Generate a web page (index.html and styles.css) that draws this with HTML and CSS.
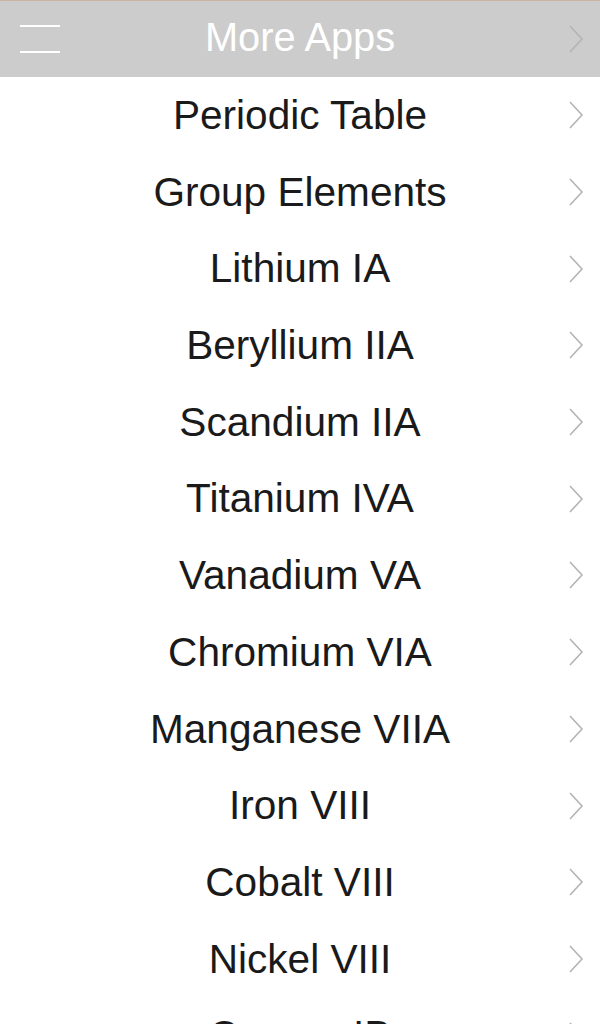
FILE: index.html
```html
<!DOCTYPE html>
<html>
<head>
<meta charset="utf-8">
<link rel="stylesheet" href="styles.css">
</head>
<body>
<div class="app">
  <header class="header">
    <div class="menu"><span class="line"></span><span class="line"></span></div>
    <div class="title">More Apps</div>
    <svg class="chev" width="16" height="28" viewBox="0 0 16 28"><path d="M2 1 L14 14 L2 27" fill="none" stroke="#b4b4b4" stroke-width="1.6"/></svg>
  </header>
  <ul class="list">
    <li class="row"><span class="label">Periodic Table</span><svg class="chev" width="16" height="28" viewBox="0 0 16 28"><path d="M2 1 L14 14 L2 27" fill="none" stroke="#b4b4b4" stroke-width="1.6"/></svg></li>
    <li class="row"><span class="label">Group Elements</span><svg class="chev" width="16" height="28" viewBox="0 0 16 28"><path d="M2 1 L14 14 L2 27" fill="none" stroke="#b4b4b4" stroke-width="1.6"/></svg></li>
    <li class="row"><span class="label">Lithium IA</span><svg class="chev" width="16" height="28" viewBox="0 0 16 28"><path d="M2 1 L14 14 L2 27" fill="none" stroke="#b4b4b4" stroke-width="1.6"/></svg></li>
    <li class="row"><span class="label">Beryllium IIA</span><svg class="chev" width="16" height="28" viewBox="0 0 16 28"><path d="M2 1 L14 14 L2 27" fill="none" stroke="#b4b4b4" stroke-width="1.6"/></svg></li>
    <li class="row"><span class="label">Scandium IIA</span><svg class="chev" width="16" height="28" viewBox="0 0 16 28"><path d="M2 1 L14 14 L2 27" fill="none" stroke="#b4b4b4" stroke-width="1.6"/></svg></li>
    <li class="row"><span class="label">Titanium IVA</span><svg class="chev" width="16" height="28" viewBox="0 0 16 28"><path d="M2 1 L14 14 L2 27" fill="none" stroke="#b4b4b4" stroke-width="1.6"/></svg></li>
    <li class="row"><span class="label">Vanadium VA</span><svg class="chev" width="16" height="28" viewBox="0 0 16 28"><path d="M2 1 L14 14 L2 27" fill="none" stroke="#b4b4b4" stroke-width="1.6"/></svg></li>
    <li class="row"><span class="label">Chromium VIA</span><svg class="chev" width="16" height="28" viewBox="0 0 16 28"><path d="M2 1 L14 14 L2 27" fill="none" stroke="#b4b4b4" stroke-width="1.6"/></svg></li>
    <li class="row"><span class="label">Manganese VIIA</span><svg class="chev" width="16" height="28" viewBox="0 0 16 28"><path d="M2 1 L14 14 L2 27" fill="none" stroke="#b4b4b4" stroke-width="1.6"/></svg></li>
    <li class="row"><span class="label">Iron VIII</span><svg class="chev" width="16" height="28" viewBox="0 0 16 28"><path d="M2 1 L14 14 L2 27" fill="none" stroke="#b4b4b4" stroke-width="1.6"/></svg></li>
    <li class="row"><span class="label">Cobalt VIII</span><svg class="chev" width="16" height="28" viewBox="0 0 16 28"><path d="M2 1 L14 14 L2 27" fill="none" stroke="#b4b4b4" stroke-width="1.6"/></svg></li>
    <li class="row"><span class="label">Nickel VIII</span><svg class="chev" width="16" height="28" viewBox="0 0 16 28"><path d="M2 1 L14 14 L2 27" fill="none" stroke="#b4b4b4" stroke-width="1.6"/></svg></li>
    <li class="row"><span class="label">Copper IB</span><svg class="chev" width="16" height="28" viewBox="0 0 16 28"><path d="M2 1 L14 14 L2 27" fill="none" stroke="#b4b4b4" stroke-width="1.6"/></svg></li>
  </ul>
</div>
</body>
</html>
```
FILE: styles.css
```css
html, body {
  margin: 0;
  padding: 0;
  background: #ffffff;
  overflow: hidden;
}
.app {
  width: 600px;
  height: 1024px;
  overflow: hidden;
  font-family: "Liberation Sans", Arial, sans-serif;
}
.header {
  position: relative;
  height: 76px;
  background: #cccccc;
  border-top: 1px solid #c9b5a2;
  display: flex;
  align-items: center;
  justify-content: center;
}
.menu {
  position: absolute;
  left: 20px;
  top: 24px;
  width: 40px;
  height: 28px;
  display: flex;
  flex-direction: column;
  justify-content: space-between;
}
.line {
  display: block;
  height: 2px;
  background: #ffffff;
}
.title {
  color: #ffffff;
  font-size: 39.8px;
  line-height: 1;
  margin-top: -2px;
}
.chev {
  position: absolute;
  right: 16px;
  top: 50%;
  margin-top: -14px;
}
.list {
  list-style: none;
  margin: 0;
  padding: 0;
}
.row {
  position: relative;
  height: 76.7px;
  display: flex;
  align-items: center;
  justify-content: center;
}
.label {
  color: #1a1a1a;
  font-size: 40.6px;
  line-height: 1;
}
```
